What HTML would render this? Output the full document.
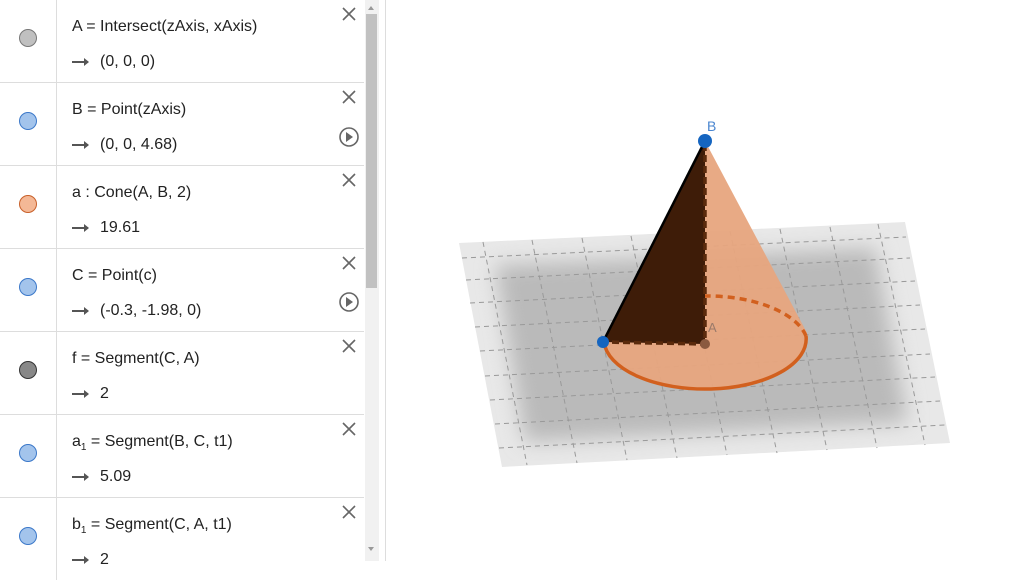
<!DOCTYPE html>
<html><head><style>
body{margin:0;width:1024px;height:561px;overflow:hidden;background:#fff;font-family:"Liberation Sans",sans-serif;position:relative}
.row{position:absolute;left:0;width:364px;height:82px;border-bottom:1px solid #ddd}
.row .c{position:absolute;left:0;top:0;width:56px;height:100%;border-right:1px solid #ddd}
.dot{position:absolute;left:19px;top:29px;width:18px;height:18px;border-radius:50%;box-sizing:border-box;border:1px solid}
.t1{position:absolute;left:72px;top:18px;font-size:16px;color:#222;white-space:nowrap}
.t2{position:absolute;left:100px;top:53px;font-size:16px;color:#222;white-space:nowrap}
.ar{position:absolute;left:72px;top:61px;width:16px;height:2px;background:#555}
.ar:after{content:"";position:absolute;right:-1px;top:-3px;border-left:5px solid #555;border-top:4px solid transparent;border-bottom:4px solid transparent}
sub{font-size:10px}
</style></head><body>
<div class="row" style="top:0"><div class="c"><div class="dot" style="background:#c0c0c0;border-color:#777"></div></div><div class="t1">A = Intersect(zAxis, xAxis)</div><div class="ar"></div><div class="t2">(0, 0, 0)</div></div>
<div class="row" style="top:83px"><div class="c"><div class="dot" style="background:#a3c4ec;border-color:#3b78c9"></div></div><div class="t1">B = Point(zAxis)</div><div class="ar"></div><div class="t2">(0, 0, 4.68)</div></div>
<div class="row" style="top:166px"><div class="c"><div class="dot" style="background:#f4b896;border-color:#c8602a"></div></div><div class="t1">a : Cone(A, B, 2)</div><div class="ar"></div><div class="t2">19.61</div></div>
<div class="row" style="top:249px"><div class="c"><div class="dot" style="background:#a3c4ec;border-color:#3b78c9"></div></div><div class="t1">C = Point(c)</div><div class="ar"></div><div class="t2">(-0.3, -1.98, 0)</div></div>
<div class="row" style="top:332px"><div class="c"><div class="dot" style="background:#888;border-color:#333"></div></div><div class="t1">f = Segment(C, A)</div><div class="ar"></div><div class="t2">2</div></div>
<div class="row" style="top:415px"><div class="c"><div class="dot" style="background:#a3c4ec;border-color:#3b78c9"></div></div><div class="t1">a<sub>1</sub> = Segment(B, C, t1)</div><div class="ar"></div><div class="t2">5.09</div></div>
<div class="row" style="top:498px;border:none"><div class="c"><div class="dot" style="background:#a3c4ec;border-color:#3b78c9"></div></div><div class="t1">b<sub>1</sub> = Segment(C, A, t1)</div><div class="ar"></div><div class="t2">2</div></div>
<svg style="position:absolute;left:0;top:0" width="1024" height="561">
<g stroke="#666" stroke-width="1.6">
<path d="M343 8l12 12M355 8l-12 12M343 91l12 12M355 91l-12 12M343 174l12 12M355 174l-12 12M343 257l12 12M355 257l-12 12M343 340l12 12M355 340l-12 12M343 423l12 12M355 423l-12 12M343 506l12 12M355 506l-12 12"/>
</g>
<g fill="none" stroke="#666" stroke-width="1.6"><circle cx="349" cy="137" r="9"/><circle cx="349" cy="302" r="9"/></g>
<path d="M346 132l0 10l7-5z M346 297l0 10l7-5z" fill="#666"/>
<rect x="365" y="0" width="14" height="561" fill="#f1f1f1"/>
<rect x="366" y="14" width="11" height="274" fill="#c1c1c1"/>
<path d="M368 10l3-4l3 4z M368 547l3 4l3-4z" fill="#999"/>
<line x1="385.5" y1="0" x2="385.5" y2="561" stroke="#ddd"/>
<defs><filter id="bl"><feGaussianBlur stdDeviation="10"/></filter><clipPath id="pl"><path d="M459 243L905 222L950 443L502 467Z"/></clipPath></defs>
<path d="M459 243L905 222L950 443L502 467Z" fill="#e8e8e8"/>
<g clip-path="url(#pl)"><path d="M495 265L875 248L908 422L525 442Z" fill="#bababa" filter="url(#bl)"/></g>
<g stroke="#999" stroke-dasharray="5,4" stroke-width="1" fill="none">
<path d="M462 258L906 237M466 280L910 258M470 303L915 281M475 327L920 305M480 351L925 329M485 376L930 354M490 400L935 377M495 424L940 401M499 448L945 425"/>
<path d="M483 242L527 465M532 240L577 463M582 238L627 460M631 236L677 458M681 234L727 455M730 231L777 453M780 229L827 450M830 227L877 448M878 224L925 445"/>
</g>
<path d="M603 342A101 50 0 0 0 807 333L705 141Z" fill="#e7a57e" opacity="0.95"/>
<path d="M604 342A101 50 0 0 0 806 336" fill="none" stroke="#d2601e" stroke-width="3.5"/>
<path d="M806 336A101 50 0 0 0 705 296" fill="none" stroke="#d2601e" stroke-width="3.5" stroke-dasharray="7,5"/>
<path d="M705 141L603 342L705 344Z" fill="#3e1c08"/>
<line x1="705" y1="141" x2="603" y2="342" stroke="#000" stroke-width="2.5"/>
<path d="M705 144V344L603 342" fill="none" stroke="#5a2a0c" stroke-width="3.5" stroke-dasharray="7,4"/>
<circle cx="705" cy="344" r="5" fill="#8a5a40"/>
<text x="708" y="332" font-size="13" fill="#9a7a6a" font-family="Liberation Sans">A</text>
<circle cx="705" cy="141" r="7" fill="#1565c0"/>
<circle cx="603" cy="342" r="6" fill="#1565c0"/>
<text x="707" y="131" font-size="14" fill="#4a86d0" font-family="Liberation Sans">B</text>
</svg>
</body></html>
